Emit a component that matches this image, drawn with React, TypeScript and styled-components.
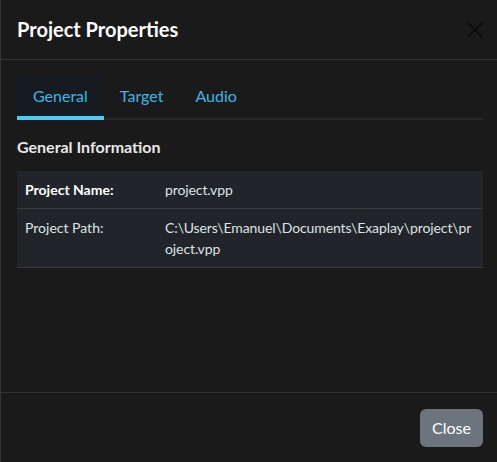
import React, { useState } from 'react';
import styled, { createGlobalStyle } from 'styled-components';

const GlobalStyle = createGlobalStyle`
  html, body {
    margin: 0;
    padding: 0;
    background: #1a1a1a;
    overflow: hidden;
  }
  body {
    font-family: Lato, "Segoe UI", "Noto Sans", sans-serif;
    color: #dee2e6;
  }
`;

const Modal = styled.div`
  width: 498px;
  height: 462px;
  display: flex;
  flex-direction: column;
  background: #1a1a1a;
  border-left: 1px solid #343434;
  border-right: 1px solid #343434;
`;

const Header = styled.div`
  display: flex;
  align-items: center;
  justify-content: space-between;
  padding: 16px;
  border-bottom: 1px solid #333333;
`;

const Title = styled.h5`
  margin: 0;
  font-size: 20px;
  font-weight: 700;
  line-height: 27px;
  color: #ffffff;
`;

const CloseIcon = styled.button`
  width: 16px;
  height: 16px;
  padding: 0;
  border: 0;
  background: transparent;
  display: flex;
  cursor: pointer;
  opacity: 0.5;
`;

const Body = styled.div`
  flex: 1;
  padding: 16px;
`;

const TabList = styled.div`
  display: flex;
  border-bottom: 2px solid #282828;
`;

const Tab = styled.button<{ $active: boolean }>`
  font-family: inherit;
  font-size: 16px;
  line-height: 24px;
  padding: 8px 16px;
  margin-bottom: -2px;
  border: 0;
  border-bottom: 4px solid ${p => (p.$active ? '#48cdf7' : 'transparent')};
  background: ${p => (p.$active ? '#151b20' : 'transparent')};
  color: #3ab8e4;
  cursor: pointer;
`;

const SectionTitle = styled.h6`
  margin: 15px 0 12px;
  font-size: 16px;
  font-weight: 700;
  line-height: 24px;
  color: #e8e8e8;
`;

const InfoTable = styled.table`
  width: 100%;
  table-layout: fixed;
  border-collapse: collapse;
  background: #212529;
  font-size: 14px;
  line-height: 21px;
  color: #dee2e6;
`;

const Row = styled.tr`
  border-bottom: 1px solid #373b3e;
`;

const Label = styled.td<{ $strong?: boolean }>`
  width: 124px;
  padding: 8px;
  vertical-align: top;
  font-weight: ${p => (p.$strong ? 700 : 400)};
  color: ${p => (p.$strong ? '#ffffff' : '#dee2e6')};
`;

const Value = styled.td`
  padding: 8px;
  vertical-align: top;
  word-break: break-all;
  letter-spacing: -0.1px;
`;

const Footer = styled.div`
  display: flex;
  justify-content: flex-end;
  padding: 16px 16px 15px;
  border-top: 1px solid #333333;
`;

const Button = styled.button`
  font-family: inherit;
  font-size: 16px;
  line-height: 24px;
  padding: 7px 12px;
  border: 0;
  border-radius: 6px;
  background: #6c757d;
  color: #ffffff;
  cursor: pointer;
`;

const tabs = ['General', 'Target', 'Audio'];

export default function App() {
  const [active, setActive] = useState('General');

  return <>
    <GlobalStyle />
    <Modal>
      <Header>
        <Title>Project Properties</Title>
        <CloseIcon aria-label="Close">
          <svg width="16" height="16" viewBox="0 0 16 16">
            <path d="M1 1 L15 15 M15 1 L1 15" stroke="#000" strokeWidth="2" />
          </svg>
        </CloseIcon>
      </Header>
      <Body>
        <TabList>
          {tabs.map(tab =>
            <Tab key={tab} $active={tab === active} onClick={() => setActive(tab)}>
              {tab}
            </Tab>
          )}
        </TabList>
        <SectionTitle>General Information</SectionTitle>
        <InfoTable>
          <tbody>
            <Row>
              <Label $strong>Project Name:</Label>
              <Value>project.vpp</Value>
            </Row>
            <Row>
              <Label>Project Path:</Label>
              <Value>C:\Users\Emanuel\Documents\Exaplay\project\project.vpp</Value>
            </Row>
          </tbody>
        </InfoTable>
      </Body>
      <Footer>
        <Button>Close</Button>
      </Footer>
    </Modal>
  </>;
}
